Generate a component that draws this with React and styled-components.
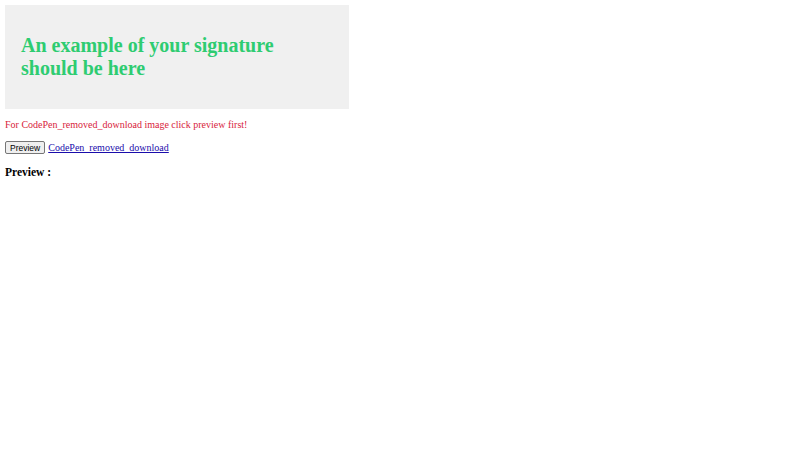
import React from 'react';
import styled, { createGlobalStyle } from 'styled-components';

const Global = createGlobalStyle`
  body {
    margin: 5px;
    font-family: "Liberation Serif", "Times New Roman", serif;
    background: #fff;
  }
`;

const Signature = styled.div`
  width: 344px;
  height: 104px;
  background: #f0f0f0;
  display: flex;
  align-items: center;
  padding: 0 16px;
  box-sizing: border-box;
`;

const Title = styled.h1`
  margin: 0;
  font-size: 20px;
  line-height: 23px;
  font-weight: bold;
  color: #2ecc71;
`;

const Note = styled.p`
  margin: 10px 0 0;
  font-size: 10px;
  line-height: 12px;
  color: #d8233b;
`;

const Actions = styled.div`
  display: flex;
  align-items: center;
  gap: 3px;
  margin-top: 10px;
`;

const Button = styled.button`
  font-family: "Liberation Sans", Arial, sans-serif;
  font-size: 8.5px;
  line-height: 10px;
  padding: 0 4px;
  height: 13px;
  box-sizing: border-box;
  border: 1px solid #767676;
  border-radius: 2px;
  background: #efefef;
  color: #000;
`;

const Link = styled.a`
  font-size: 10px;
  line-height: 12px;
  color: #1a0dab;
  text-decoration: underline;
`;

const PreviewTitle = styled.h3`
  margin: 12px 0 0;
  font-size: 11.5px;
  line-height: 13px;
  font-weight: bold;
  color: #000;
`;

export default function App() {
  return (
    <>
      <Global />
      <Signature>
        <Title>An example of your signature should be here</Title>
      </Signature>
      <Note>For CodePen_removed_download image click preview first!</Note>
      <Actions>
        <Button>Preview</Button>
        <Link href="#">CodePen_removed_download</Link>
      </Actions>
      <PreviewTitle>Preview :</PreviewTitle>
    </>
  );
}
